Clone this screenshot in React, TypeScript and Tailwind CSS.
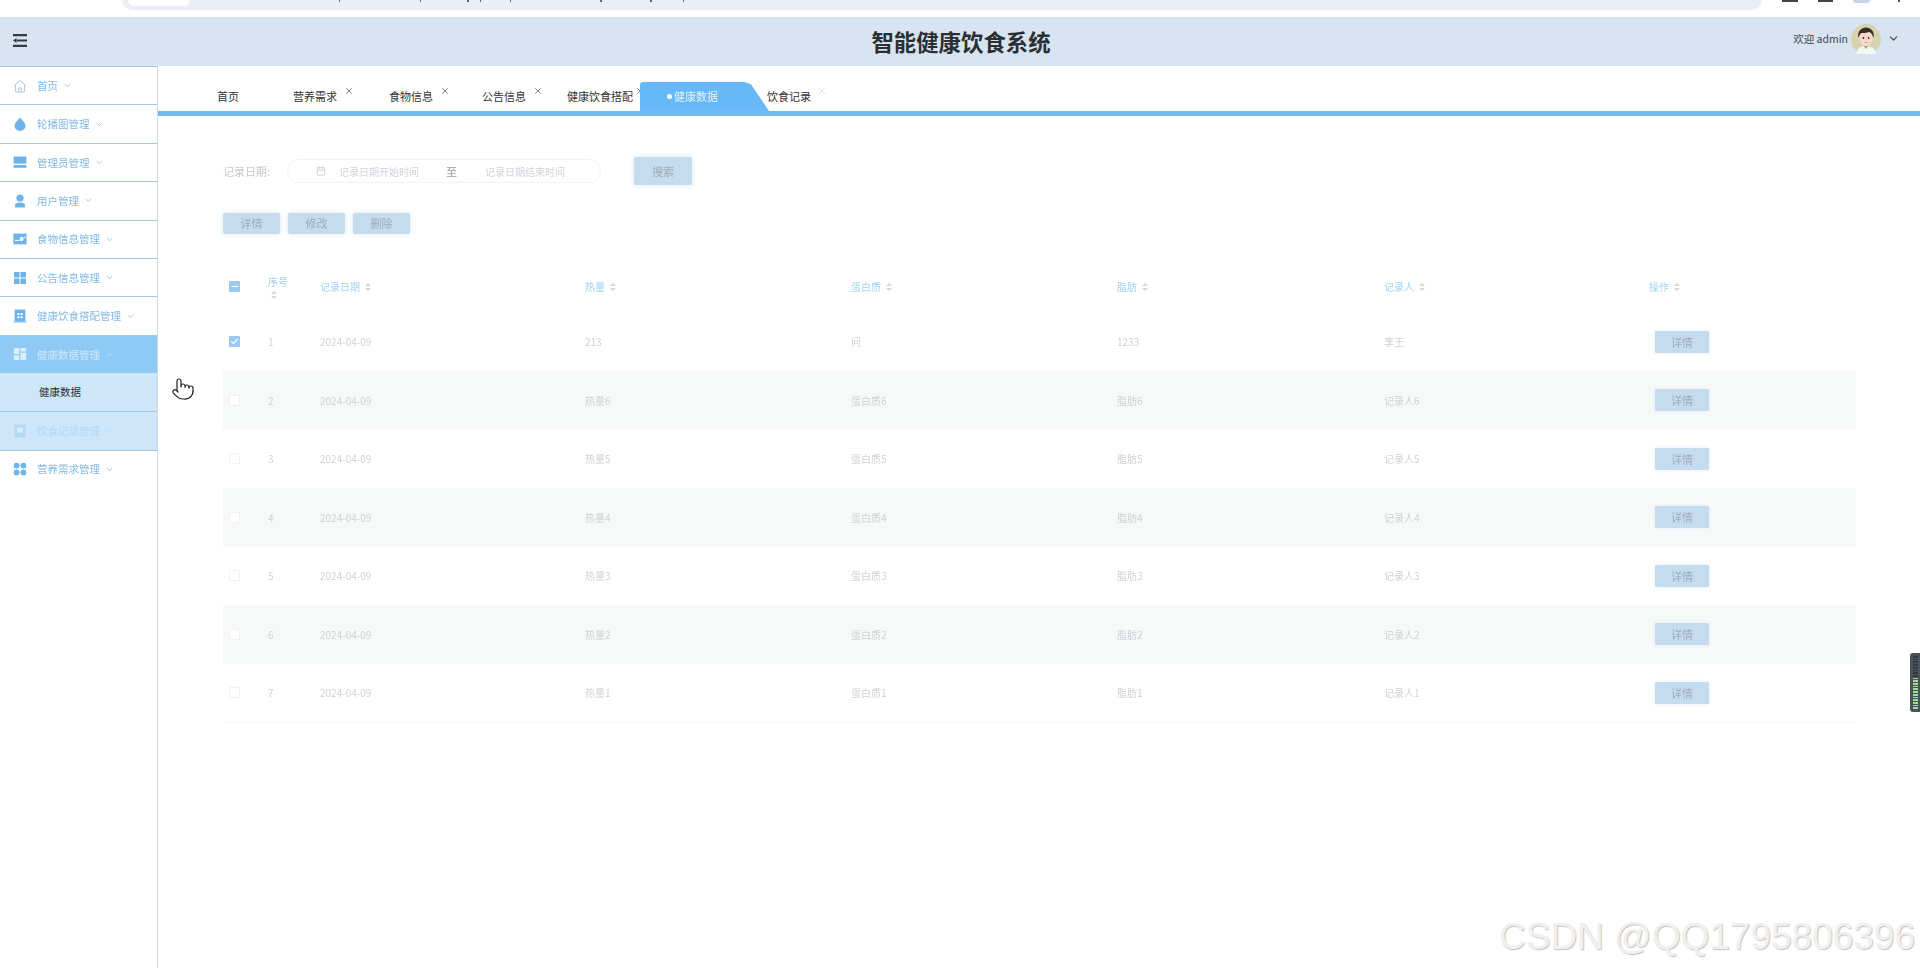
import React from 'react';
import { ChevronDown, ChevronUp, Pointer, X, Calendar, Check } from 'lucide-react';

const cjk = 'font-["Noto_Sans_CJK_SC","Liberation_Sans",sans-serif]';

const HomeIcon = () => (
  <svg viewBox="0 0 14 14" className="h-[14px] w-[14px]" fill="none" stroke="#a9c4dc" strokeWidth="0.9">
    <path d="M1 7 7 1.2 13 7" />
    <path d="M2.6 6v7h8.8V6" />
    <path d="M5.6 13V9h2.8v4" />
  </svg>
);
const DropIcon = () => (
  <svg viewBox="0 0 14 14" className="h-[14px] w-[14px]" fill="#6db3ec">
    <path d="M7 .6C9 3.2 12.4 5.6 12.4 9A5.4 5 0 0 1 1.6 9C1.6 5.6 5 3.2 7 .6Z" />
  </svg>
);
const AdminIcon = () => (
  <svg viewBox="0 0 14 14" className="h-[14px] w-[14px]" fill="#6db3ec">
    <path d="M.6 1.500h12.800v7.200H.6z" />
    <path d="M.6 10h12.800v2.800H.6z" />
  </svg>
);
const UserIcon = () => (
  <svg viewBox="0 0 14 14" className="h-[14px] w-[14px]" fill="#6db3ec">
    <circle cx="7" cy="4" r="3.600" />
    <path d="M2 13.400V11c0-1.800 2-2.600 5-2.600s5 .8 5 2.600v2.400z" />
  </svg>
);
const FoodIcon = () => (
  <svg viewBox="0 0 14 14" className="h-[14px] w-[14px]">
    <path d="M.4 1.600h13.200v10.800H.4z" fill="#6db3ec" />
    <circle cx="8.600" cy="7" r="2" fill="#fff" />
    <path d="M1.800 8.400h5M10.400 5.400h2.400" stroke="#fff" strokeWidth="1" />
  </svg>
);
const GridIcon = () => (
  <svg viewBox="0 0 14 14" className="h-[14px] w-[14px]" fill="#6db3ec">
    <path d="M1 1h5.500v5.500H1zM7.500 1H13v5.500H7.500zM1 7.500h5.500V13H1zM7.500 7.500H13V13H7.500z" />
  </svg>
);
const BuildingIcon = () => (
  <svg viewBox="0 0 14 14" className="h-[14px] w-[14px]">
    <path d="M1.600.6h10.800v12H1.600z" fill="#6db3ec" />
    <path d="M.4 12.600h13.200v.9H.4z" fill="#6db3ec" />
    <path d="M4.400 4h2v2h-2zM7.600 4h2v2h-2zM4.400 7.200h2v2h-2zM7.600 7.200h2v2h-2z" fill="#fff" />
  </svg>
);
const DataIcon = () => (
  <svg viewBox="0 0 14 14" className="h-[14px] w-[14px]" fill="#dcedfb">
    <path d="M.8 1h5.400v6H.8zM7.400 1h5.800v3.600H7.400zM.8 8.200h5.400V13H.8zM7.400 5.800h5.800V13H7.400z" />
  </svg>
);
const BookIcon = () => (
  <svg viewBox="0 0 14 14" className="h-[14px] w-[14px]">
    <path d="M1.400.6h11.200v12.800H1.400z" fill="#b3d8f4" />
    <path d="M4 3.600h6v5H4z" fill="#d8ecfb" />
  </svg>
);
const DotsIcon = () => (
  <svg viewBox="0 0 14 14" className="h-[14px] w-[14px]" fill="#6db3ec">
    <circle cx="3.600" cy="3.600" r="2.900" />
    <circle cx="10.400" cy="3.600" r="2.900" />
    <circle cx="3.600" cy="10.400" r="2.900" />
    <circle cx="10.400" cy="10.400" r="2.900" />
  </svg>
);

const menu = [
  { name: '首页', icon: <HomeIcon /> },
  { name: '轮播图管理', icon: <DropIcon /> },
  { name: '管理员管理', icon: <AdminIcon /> },
  { name: '用户管理', icon: <UserIcon /> },
  { name: '食物信息管理', icon: <FoodIcon /> },
  { name: '公告信息管理', icon: <GridIcon /> },
  { name: '健康饮食搭配管理', icon: <BuildingIcon /> },
];

const tabs = [
  { name: '首页', width: 'w-[76px]' },
  { name: '营养需求', width: 'w-[96px]', close: true },
  { name: '食物信息', width: 'w-[93px]', close: true },
  { name: '公告信息', width: 'w-[85px]', close: true },
  { name: '健康饮食搭配', width: 'w-[73px]', close: true },
];

const rows = [
  { id: 1, date: '2024-04-09', heat: '213', protein: '问', fat: '1233', person: '李王' },
  { id: 2, date: '2024-04-09', heat: '热量6', protein: '蛋白质6', fat: '脂肪6', person: '记录人6' },
  { id: 3, date: '2024-04-09', heat: '热量5', protein: '蛋白质5', fat: '脂肪5', person: '记录人5' },
  { id: 4, date: '2024-04-09', heat: '热量4', protein: '蛋白质4', fat: '脂肪4', person: '记录人4' },
  { id: 5, date: '2024-04-09', heat: '热量3', protein: '蛋白质3', fat: '脂肪3', person: '记录人3' },
  { id: 6, date: '2024-04-09', heat: '热量2', protein: '蛋白质2', fat: '脂肪2', person: '记录人2' },
  { id: 7, date: '2024-04-09', heat: '热量1', protein: '蛋白质1', fat: '脂肪1', person: '记录人1' },
];

const columns = '[grid-template-columns:45px_52px_265px_266px_266px_267px_265px_1fr]';
const meter = ['d', 'd', 'd', 'd', 'd', 'd', 'd', 'd', 'y', 'g', 'g', 'g', 'g', 'g', 'g', 'g', 'g', 'g', 'g', 'g'];

const SortArrows = () => (
  <span className="ml-[5px] inline-flex flex-col gap-[2px]">
    <span className="h-0 w-0 border-x-[3px] border-b-[3px] border-x-transparent border-b-[#d3d7db]" />
    <span className="h-0 w-0 border-x-[3px] border-t-[3px] border-x-transparent border-t-[#d3d7db]" />
  </span>
);

const Avatar = () => (
  <svg viewBox="0 0 30 30" className="h-[30px] w-[30px]">
    <circle cx="15" cy="15" r="15" fill="#d6d3ae" />
    <path d="M5 30c1-6 5-8 10-8s9 2 10 8z" fill="#f4f6f2" />
    <path d="M13 22l2 3 2-3z" fill="#8aa39a" />
    <ellipse cx="15" cy="14" rx="6.600" ry="8" fill="#f6d9c8" />
    <path d="M7.500 14c-1.500-7 3-10.500 7.500-10.500S24 7 22.500 14c-1-3-2-5-4-6-3 1-7 1-8 1-1.500 1-2.200 2.500-3 5z" fill="#3e2d2b" />
    <circle cx="12.400" cy="14" r=".9" fill="#3e2d2b" />
    <circle cx="17.600" cy="14" r=".9" fill="#3e2d2b" />
    <path d="M13.500 18.500h3" stroke="#d48a80" strokeWidth=".8" />
  </svg>
);

const App: React.FC = () => {
  return (
    <div className={`relative flex h-[968px] w-[1920px] flex-col overflow-hidden bg-white ${cjk}`}>
      {/* clipped browser toolbar */}
      <div className="flex h-[17px] items-start pl-[122px]">
        <div className="flex h-[10px] w-[1640px] items-start rounded-b-[10px] bg-[#eceef5] pl-[6px]">
          <div className="h-[6px] w-[62px] rounded-b-[8px] bg-white" />
          <span className="ml-[149px] h-[2px] w-[1px] bg-[#666]" />
          <span className="ml-[80px] h-[2px] w-[1px] bg-[#666]" />
          <span className="ml-[46px] h-[2px] w-[2px] bg-[#666]" />
          <span className="ml-[11px] h-[2px] w-[1px] bg-[#666]" />
          <span className="ml-[29px] h-[2px] w-[1px] bg-[#666]" />
          <span className="ml-[89px] h-[2px] w-[2px] bg-[#666]" />
          <span className="ml-[48px] h-[2px] w-[2px] bg-[#666]" />
          <span className="ml-[31px] h-[2px] w-[1px] bg-[#666]" />
        </div>
        <div className="ml-[20px] h-[2px] w-[16px] bg-[#444]" />
        <div className="ml-[20px] h-[2px] w-[15px] bg-[#444]" />
        <div className="ml-[20px] h-[3px] w-[17px] rounded-b-full bg-[#c9d5f0]" />
        <div className="ml-[28px] h-[2px] w-[2px] bg-[#555]" />
      </div>

      <header className="relative flex h-[49px] items-center justify-between bg-[#d7e5f3] pr-[20px] pl-[13px]">
        <svg viewBox="0 0 14 13" className="mb-[3px] h-[13px] w-[14px]" fill="#2f3b47">
          <path d="M0 0h14v2.200H0zM0 10.800h14V13H0zM4 5.400h10v2.200H4zM0 6.500l3.600-2.600v5.200z" />
        </svg>
        <h1 className="absolute left-[871px] w-[180px] text-center text-[22.4px] leading-none font-bold whitespace-nowrap text-[#2b2f33]">
          智能健康饮食系统
        </h1>
        <div className="flex items-center pb-[6px] text-[#3d4650]">
          <span className="text-[10.5px]">欢迎 admin</span>
          <span className="ml-[3px]"><Avatar /></span>
          <ChevronDown className="ml-[6px] h-[13px] w-[13px]" strokeWidth={2.2} />
        </div>
      </header>

      <div className="flex flex-1">
        <aside className="w-[158px] shrink-0 border-r border-[#cfd9e3] text-[10.5px] text-[#82b9e8]">
          {menu.map((item) => (
            <div key={item.name} className="flex h-[38.4px] items-center border-t border-[#a5c6de] pl-[13px] blur-[0.3px]">
              {item.icon}
              <span className="ml-[10px]">{item.name}</span>
              <ChevronDown className="ml-[5px] h-[9px] w-[9px]" />
            </div>
          ))}
          <div className="flex h-[38.4px] items-center border-t border-[#a5c6de] bg-[#8fcaf7] pl-[13px] text-[#cfe6fb] blur-[0.3px]">
            <DataIcon />
            <span className="ml-[10px]">健康数据管理</span>
            <ChevronUp className="ml-[5px] h-[9px] w-[9px]" />
          </div>
          <div className="flex h-[38px] items-center bg-[#cde6fa] pl-[39px] text-[#333]">健康数据</div>
          <div className="flex h-[38.4px] items-center border-t border-[#a5c6de] bg-[#cde6fa] pl-[13px] text-[#b3d8f4] blur-[0.3px]">
            <BookIcon />
            <span className="ml-[10px]">饮食记录管理</span>
            <ChevronDown className="ml-[5px] h-[9px] w-[9px]" />
          </div>
          <div className="flex h-[38.4px] items-center border-t border-[#a5c6de] pl-[13px] blur-[0.3px]">
            <DotsIcon />
            <span className="ml-[10px]">营养需求管理</span>
            <ChevronDown className="ml-[5px] h-[9px] w-[9px]" />
          </div>
        </aside>

        <main className="min-w-0 flex-1">
          <div className="flex h-[50px] items-end border-b-[5px] border-[#6fbcf5] pl-[59px] text-[11px] text-[#333]">
            {tabs.map((tab) => (
              <div key={tab.name} className={`flex h-[29px] shrink-0 items-start pt-[6px] whitespace-nowrap ${tab.width}`}>
                <span>{tab.name}</span>
                {tab.close && (
                  <X className={`mt-[-2px] h-[10px] w-[10px] shrink-0 ${tab.name === '健康饮食搭配' ? 'ml-[2px]' : 'ml-[7px]'}`} strokeWidth={1.4} />
                )}
              </div>
            ))}
            <div className="relative flex h-[29px] w-[129px] shrink-0 items-start rounded-tl-[3px] bg-[#66b8f7] pt-[6px] pl-[27px] text-[#e4f2fe] [clip-path:polygon(0_0,81%_0,86%_8%,100%_100%,0_100%)]">
              <span className="mt-[6px] mr-[2px] h-[5px] w-[5px] rounded-full bg-white" />
              <span className="blur-[0.3px]">健康数据</span>
              <X className="mt-[-2px] ml-[6px] h-[10px] w-[10px] text-[#8fa9be]" strokeWidth={1.4} />
            </div>
            <div className="ml-[-2px] flex h-[29px] items-start pt-[6px]">
              <span>饮食记录</span>
              <X className="mt-[-2px] ml-[6px] h-[10px] w-[10px] text-[#c9cdd2]" strokeWidth={1.4} />
            </div>
          </div>

          <div className="pt-[41px] pr-[64px] pl-[65px] blur-[0.55px]">
            <div className="flex h-[28px] items-center text-[10px]">
              <span className="w-[64px] text-[11px] text-[#c4c8cd]">记录日期:</span>
              <div className="flex h-[24px] w-[314px] items-center rounded-full border border-[#f1f2f4] text-[#d0d3d8]">
                <Calendar className="ml-[28px] h-[10px] w-[10px] text-[#c9ccd1]" />
                <span className="ml-[13px] w-[107px]">记录日期开始时间</span>
                <span className="w-[39px] text-[11px] text-[#9aa1a8]">至</span>
                <span>记录日期结束时间</span>
              </div>
              <button className="ml-[33px] h-[28px] w-[58px] rounded-[2px] bg-[#c5dcee] text-[11px] text-[#9cadbc] shadow-[0_0_6px_#d6e8f7]">
                搜索
              </button>
            </div>

            <div className="mt-[28px] flex gap-[8px]">
              {['详情', '修改', '删除'].map((label) => (
                <button key={label} className="h-[21px] w-[57px] rounded-[2px] bg-[#c5dcee] text-[11px] text-[#9cadbc] shadow-[0_0_5px_#d6e8f7]">
                  {label}
                </button>
              ))}
            </div>

            <div className="mt-[26px] text-[10px] text-[#cfd2d5]">
              <div className={`grid h-[53px] items-center text-[#a2d2f5] ${columns}`}>
                <span className="ml-[6px] flex h-[11px] w-[11px] items-center justify-center rounded-[1px] bg-[#9cc9f1]">
                  <span className="h-[1.500px] w-[6px] bg-white" />
                </span>
                <span className="flex flex-col items-start">
                  序号
                  <span className="mt-[2px] ml-[3px] flex flex-col gap-[2px]">
                    <span className="h-0 w-0 border-x-[3px] border-b-[3px] border-x-transparent border-b-[#d3d7db]" />
                    <span className="h-0 w-0 border-x-[3px] border-t-[3px] border-x-transparent border-t-[#d3d7db]" />
                  </span>
                </span>
                {['记录日期', '热量', '蛋白质', '脂肪', '记录人', '操作'].map((title) => (
                  <span key={title} className="flex items-center">
                    {title}
                    <SortArrows />
                  </span>
                ))}
              </div>

              {rows.map((row) => (
                <div
                  key={row.id}
                  className={`grid h-[58.500px] items-center border-b border-[#f7f8f9] ${columns} ${row.id % 2 === 0 ? 'bg-[#f7f9f9]' : 'bg-white'}`}
                >
                  {row.id === 1 ? (
                    <span className="ml-[6px] flex h-[11px] w-[11px] items-center justify-center rounded-[1px] bg-[#9cc9f1]">
                      <Check className="h-[9px] w-[9px] text-white" strokeWidth={3} />
                    </span>
                  ) : (
                    <span className="ml-[6px] h-[11px] w-[11px] rounded-[1px] border border-[#f0f1f3] bg-white" />
                  )}
                  <span>{row.id}</span>
                  <span>{row.date}</span>
                  <span>{row.heat}</span>
                  <span>{row.protein}</span>
                  <span>{row.fat}</span>
                  <span>{row.person}</span>
                  <button className="ml-[6px] h-[22px] w-[54px] rounded-[1px] bg-[#c5dcee] text-[11px] text-[#9cadbc] shadow-[0_0_4px_#dcebf8]">
                    详情
                  </button>
                </div>
              ))}
            </div>
          </div>
        </main>
      </div>

      {/* mouse cursor from the capture */}
      <Pointer className="absolute top-[377px] left-[171px] h-[24px] w-[24px] fill-white text-[#222]" strokeWidth={1.2} />

      {/* level meter widget clipped at the right edge */}
      <div className="absolute top-[653px] right-0 flex h-[59px] w-[10px] flex-col gap-[1px] rounded-l-[3px] bg-[#4b5258] py-[3px] pl-[3px]">
        {meter.map((kind, i) => (
          <span
            key={i}
            className={`h-[2px] w-[5px] ${kind === 'd' ? 'bg-[#2f3a46]' : kind === 'y' ? 'bg-[#c3c86a]' : 'bg-[#9fdc9a]'}`}
          />
        ))}
      </div>

      <div className='absolute top-[915px] left-[1499px] font-["Liberation_Sans",sans-serif] text-[37px] leading-[44px] whitespace-nowrap text-[#f0f0f0] [text-shadow:1px_1px_1px_#c4c4c4]'>
        CSDN @QQ1795806396
      </div>
    </div>
  );
};

export default App;
